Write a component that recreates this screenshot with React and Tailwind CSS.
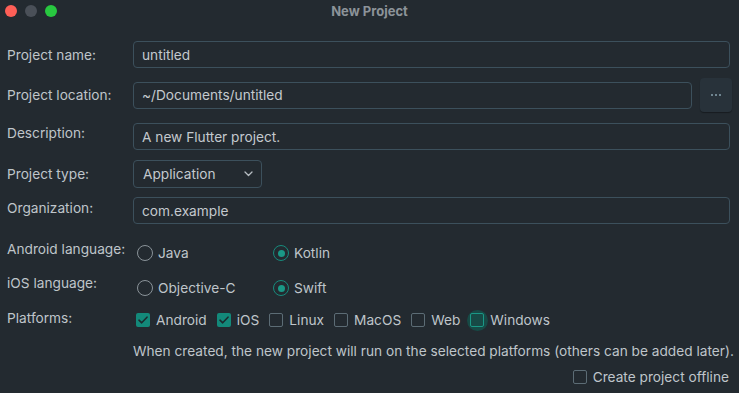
import React from "react";

function Input({ value, className = "" }) {
  return (
    <div className={"h-[27px] flex items-center rounded-[4px] border border-[#3c505c] px-[8px] text-[#c3c9ce] " + className}>
      {value}
    </div>
  );
}

function Radio({ checked, label, className = "" }) {
  return (
    <div className={"flex items-center " + className}>
      {checked ? (
        <div className="w-[16px] h-[16px] rounded-full border-[1.5px] border-[#178a7c] flex items-center justify-center">
          <div className="w-[7px] h-[7px] rounded-full bg-[#1a9886]" />
        </div>
      ) : (
        <div className="w-[16px] h-[16px] rounded-full border-[1.5px] border-[#8a9399]" />
      )}
      <span className="ml-[5px]">{label}</span>
    </div>
  );
}

function Check({ checked, label, focus, className = "" }) {
  return (
    <div className={"flex items-center " + className}>
      <div className="relative w-[14px] h-[14px] flex items-center justify-center">
        {focus && <div className="absolute w-[21px] h-[21px] rounded-full bg-[#174a46] left-[-3.5px] top-[-3.5px]" />}
        {checked ? (
          <div className="relative w-[14px] h-[14px] rounded-[2px] bg-[#13897a] flex items-center justify-center">
            <svg width="10" height="8" viewBox="0 0 10 8" fill="none">
              <path d="M1 4.2 L3.7 6.8 L9 1.2" stroke="#1c2a2e" strokeWidth="1.6" strokeLinecap="round" strokeLinejoin="round" />
            </svg>
          </div>
        ) : (
          <div className={"relative w-[14px] h-[14px] rounded-[2px] border-[1.5px] " + (focus ? "border-[#1a9886]" : "border-[#5c6c75]")} />
        )}
      </div>
      <span className="ml-[6px]">{label}</span>
    </div>
  );
}

export default function App() {
  return (
    <div className="w-[739px] h-[393px] bg-[#232a30] text-[#bfc5ca] text-[13.7px] leading-[16px] overflow-hidden font-[Inter,sans-serif]">
      <div className="h-[22px] grid grid-cols-[1fr_auto_1fr] items-center px-[5px]">
        <div className="flex gap-[8px]">
          <div className="w-[12px] h-[12px] rounded-full bg-[#fe5f57]" />
          <div className="w-[12px] h-[12px] rounded-full bg-[#4a5058]" />
          <div className="w-[12px] h-[12px] rounded-full bg-[#28c840]" />
        </div>
        <div className="font-bold text-[#8c9399] text-[13px]">New Project</div>
        <div />
      </div>

      <div className="pl-[7px] pr-[9px] pt-[19px] flex flex-col">
        <div className="h-[27px] flex items-center">
          <div className="w-[126px]">Project name:</div>
          <Input value="untitled" className="flex-1" />
        </div>

        <div className="h-[34px] mt-[10px] flex items-center mr-[-2px]">
          <div className="w-[126px]">Project location:</div>
          <Input value="~/Documents/untitled" className="flex-1" />
          <div className="ml-[8px] w-[32px] h-[34px] rounded-[4px] bg-[#28323a] shadow-[0_1px_1px_rgba(0,0,0,0.35)] flex items-center justify-center gap-[2px]">
            <div className="w-[2px] h-[2px] bg-[#6f8590]" />
            <div className="w-[2px] h-[2px] bg-[#6f8590]" />
            <div className="w-[2px] h-[2px] bg-[#6f8590]" />
          </div>
        </div>

        <div className="h-[27px] mt-[11px] flex items-center">
          <div className="w-[126px] pb-[8px]">Description:</div>
          <Input value="A new Flutter project." className="flex-1" />
        </div>

        <div className="h-[28px] mt-[10px] flex items-center">
          <div className="w-[126px]">Project type:</div>
          <div className="w-[129px] h-[28px] rounded-[4px] border border-[#3c505c] flex items-center justify-between pl-[9px] pr-[8px] text-[#c3c9ce]">
            <span>Application</span>
            <svg width="9" height="6" viewBox="0 0 9 6" fill="none">
              <path d="M1 1 L4.5 4.5 L8 1" stroke="#b7bec3" strokeWidth="1.3" strokeLinecap="round" strokeLinejoin="round" />
            </svg>
          </div>
        </div>

        <div className="h-[27px] mt-[9px] flex items-center">
          <div className="w-[126px] pb-[5px]">Organization:</div>
          <Input value="com.example" className="flex-1" />
        </div>

        <div className="h-[20px] mt-[19px] flex items-center">
          <div className="w-[126px] pb-[8px]">Android language:</div>
          <div className="flex pl-[4px]">
            <Radio label="Java" className="w-[136px]" />
            <Radio label="Kotlin" checked />
          </div>
        </div>

        <div className="h-[20px] mt-[15px] flex items-center">
          <div className="w-[126px] pb-[10px]">iOS language:</div>
          <div className="flex pl-[4px]">
            <Radio label="Objective-C" className="w-[136px]" />
            <Radio label="Swift" checked />
          </div>
        </div>

        <div className="h-[20px] mt-[12px] flex items-center">
          <div className="w-[126px] pb-[4px]">Platforms:</div>
          <div className="flex items-center gap-[10px] pl-[3px]">
            <Check label="Android" checked />
            <Check label="iOS" checked />
            <Check label="Linux" />
            <Check label="MacOS" />
            <Check label="Web" />
            <Check label="Windows" focus />
          </div>
        </div>

        <div className="mt-[13px] pl-[126px] whitespace-nowrap">
          When created, the new project will run on the selected platforms (others can be added later).
        </div>

        <div className="mt-[10px] flex justify-end pr-[1px]">
          <Check label="Create project offline" />
        </div>
      </div>
    </div>
  );
}
